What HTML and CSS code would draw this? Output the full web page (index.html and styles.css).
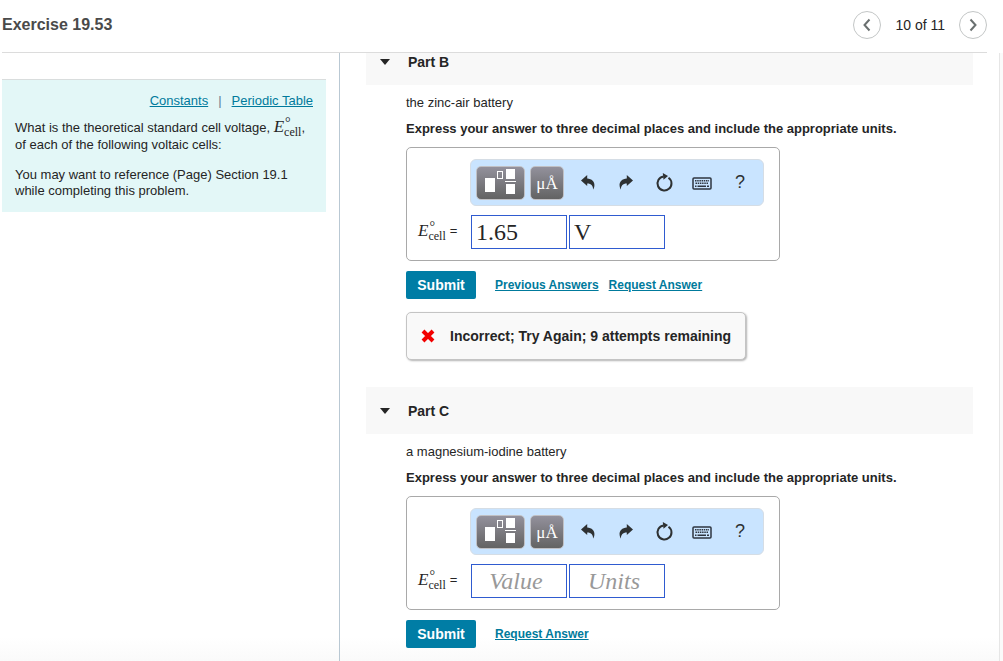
FILE: index.html
```html
<!DOCTYPE html>
<html lang="en">

<head>
    <meta charset="UTF-8">
    <meta name="viewport" content="width=device-width, initial-scale=1">
    <title>Exercise 19.53</title>
    <link rel="stylesheet" href="styles.css">
</head>

<body>
    <!-- shared icons -->
    <svg class="sprite" aria-hidden="true">
        <symbol id="icon-templates" viewBox="0 0 32 28">
            <rect x="0" y="9" width="10" height="14" fill="#fff"/>
            <rect x="12.500" y="2.500" width="5" height="7" fill="none" stroke="#fff"/>
            <rect x="21" y="0" width="9" height="10" fill="#fff"/>
            <rect x="20" y="12" width="11" height="1" fill="#fff"/>
            <rect x="21" y="15" width="9" height="10" fill="#fff"/>
        </symbol>
        <symbol id="icon-undo" viewBox="0 0 14 16">
            <path d="M0 5.500 6.200 0v3.400c4.600.2 7.600 3.400 7.200 7.300-.1 1.600-.8 3-1.400 3.900.3-3.400-1.600-6.100-5.800-6.100V11z" fill="#2e3132"/>
        </symbol>
        <symbol id="icon-redo" viewBox="0 0 14 16">
            <path d="M14 5.500 7.800 0v3.400C3.200 3.600.2 6.800.6 10.700c.1 1.600.8 3 1.400 3.900-.3-3.400 1.600-6.100 5.800-6.100V11z" fill="#2e3132"/>
        </symbol>
        <symbol id="icon-reset" viewBox="0 0 18 20">
            <path d="M13.500 4.700A7 7 0 1 1 8.500 3.500" fill="none" stroke="#2e3132" stroke-width="2"/>
            <path d="M7.800 0 13 3.100 8.500 6.800z" fill="#2e3132"/>
        </symbol>
        <symbol id="icon-keyboard" viewBox="0 0 20 14">
            <rect x="1" y="2" width="18" height="11" rx="1" fill="none" stroke="#2e3540" stroke-width="1.500"/>
            <path d="M3 4.800h14M3.500 7.300h13" stroke="#2e3540" stroke-width="1.500" stroke-dasharray="1.500 .7"/>
            <path d="M3 10.200h1.500M5.500 10.200h8.500M15 10.200h2" stroke="#2e3540" stroke-width="1.500"/>
        </symbol>
        <symbol id="icon-cross" viewBox="0 0 14 14">
            <path d="M2 2 12 12M12 2 2 12" stroke="#f20000" stroke-width="4"/>
        </symbol>
        <symbol id="icon-left" viewBox="0 0 10 14">
            <path d="M7.500 1.500 2.500 7l5 5.500" fill="none" stroke="#6a7070" stroke-width="2"/>
        </symbol>
        <symbol id="icon-right" viewBox="0 0 10 14">
            <path d="M2.500 1.500l5 5.500-5 5.500" fill="none" stroke="#6a7070" stroke-width="2"/>
        </symbol>
    </svg>

    <header class="page-header">
        <h1>Exercise 19.53</h1>
        <nav class="pager">
            <button type="button" class="pager-btn" aria-label="Previous"><svg width="10" height="14"><use href="#icon-left"/></svg></button>
            <span>10 of 11</span>
            <button type="button" class="pager-btn" aria-label="Next"><svg width="10" height="14"><use href="#icon-right"/></svg></button>
        </nav>
    </header>

    <div class="workspace">
        <aside class="sidebar">
            <div class="intro">
                <div class="resources">
                    <a href="#">Constants</a>
                    <span class="divider">|</span>
                    <a href="#">Periodic Table</a>
                </div>
                <p>What is the theoretical standard cell voltage, <span class="formula"><i>E</i><span class="scripts"><span class="sup">°</span><span>cell</span></span></span>, of each of the following voltaic cells:</p>
                <p>You may want to reference (Page) Section 19.1 while completing this problem.</p>
            </div>
        </aside>

        <main class="parts">
            <section class="part">
                <h2 class="part-header"><button type="button" class="toggle"><span class="caret"></span>Part B</button></h2>
                <div class="part-body">
                    <p>the zinc-air battery</p>
                    <p class="instructions">Express your answer to three decimal places and include the appropriate units.</p>
                    <div class="answer-box">
                        <div class="toolbar">
                            <button type="button" class="tool-main templates" aria-label="Templates"><svg width="32" height="28"><use href="#icon-templates"/></svg></button>
                            <button type="button" class="tool-main symbols">μÅ</button>
                            <button type="button" class="tool" aria-label="Undo"><svg width="14" height="16"><use href="#icon-undo"/></svg></button>
                            <button type="button" class="tool" aria-label="Redo"><svg width="14" height="16"><use href="#icon-redo"/></svg></button>
                            <button type="button" class="tool" aria-label="Reset"><svg width="18" height="20"><use href="#icon-reset"/></svg></button>
                            <button type="button" class="tool" aria-label="Keyboard shortcuts"><svg width="20" height="14"><use href="#icon-keyboard"/></svg></button>
                            <button type="button" class="tool">?</button>
                        </div>
                        <label class="lhs" for="value-b"><span class="formula"><i>E</i><span class="scripts"><span class="sup">°</span><span>cell</span></span></span> <span>=</span></label>
                        <div class="fields">
                            <input type="text" id="value-b" value="1.65" placeholder="Value">
                            <input type="text" aria-label="Units" value="V" placeholder="Units">
                        </div>
                    </div>
                    <div class="actions">
                        <button type="button" class="submit">Submit</button>
                        <a href="#">Previous Answers</a>
                        <a href="#">Request Answer</a>
                    </div>
                    <div class="feedback">
                        <svg width="14" height="14" aria-hidden="true"><use href="#icon-cross"/></svg>
                        <span>Incorrect; Try Again; 9 attempts remaining</span>
                    </div>
                </div>
            </section>

            <section class="part">
                <h2 class="part-header"><button type="button" class="toggle"><span class="caret"></span>Part C</button></h2>
                <div class="part-body">
                    <p>a magnesium-iodine battery</p>
                    <p class="instructions">Express your answer to three decimal places and include the appropriate units.</p>
                    <div class="answer-box">
                        <div class="toolbar">
                            <button type="button" class="tool-main templates" aria-label="Templates"><svg width="32" height="28"><use href="#icon-templates"/></svg></button>
                            <button type="button" class="tool-main symbols">μÅ</button>
                            <button type="button" class="tool" aria-label="Undo"><svg width="14" height="16"><use href="#icon-undo"/></svg></button>
                            <button type="button" class="tool" aria-label="Redo"><svg width="14" height="16"><use href="#icon-redo"/></svg></button>
                            <button type="button" class="tool" aria-label="Reset"><svg width="18" height="20"><use href="#icon-reset"/></svg></button>
                            <button type="button" class="tool" aria-label="Keyboard shortcuts"><svg width="20" height="14"><use href="#icon-keyboard"/></svg></button>
                            <button type="button" class="tool">?</button>
                        </div>
                        <label class="lhs" for="value-c"><span class="formula"><i>E</i><span class="scripts"><span class="sup">°</span><span>cell</span></span></span> <span>=</span></label>
                        <div class="fields">
                            <input type="text" id="value-c" placeholder="Value">
                            <input type="text" aria-label="Units" placeholder="Units">
                        </div>
                    </div>
                    <div class="actions">
                        <button type="button" class="submit">Submit</button>
                        <a href="#">Request Answer</a>
                    </div>
                </div>
            </section>
        </main>
        <div class="gutter"></div>
    </div>
</body>

</html>
```
FILE: styles.css
```css
* {
    box-sizing: border-box;
}
body {
    display: flex;
    flex-direction: column;
    height: 100vh;
    margin: 0;
    overflow: hidden;
    background: #fff;
    color: #252525;
    font-family: "Liberation Sans", Arial, sans-serif;
    font-size: 13px;
    line-height: 16px;
}
h1, h2, p {
    margin: 0;
}
button, input {
    margin: 0;
    padding: 0;
    font-family: inherit;
}
button {
    border: 0;
    background: none;
    color: inherit;
    cursor: pointer;
}
a {
    color: #007a9c;
}
.sprite {
    display: none;
}

/* header */
.page-header {
    display: flex;
    flex: none;
    align-items: center;
    justify-content: space-between;
    height: 53px;
    margin: 0 16px 0 2px;
    padding-bottom: 3px;
    border-bottom: 1px solid #dcdcdc;
}
.page-header h1 {
    color: #4a4a4a;
    font-size: 16px;
}
.pager {
    display: flex;
    align-items: center;
    gap: 14px;
    font-size: 14px;
}
.pager-btn {
    display: flex;
    align-items: center;
    justify-content: center;
    width: 28px;
    height: 28px;
    border: 1px solid #c3c6c6;
    border-radius: 50%;
}

.workspace {
    display: flex;
    flex: 1;
    min-height: 0;
    background: linear-gradient(to top, #fafafa, #fff 24px);
}

/* left column */
.sidebar {
    flex: none;
    width: 340px;
    padding: 26px 13px 0 2px;
    border-right: 1px solid #b9c8d3;
}
.intro {
    padding: 13px;
    border-top: 1px solid #d9dddd;
    background: #e3f7f7;
}
.intro p {
    margin-bottom: 14px;
}
.intro p:last-child {
    margin-bottom: 0;
}
.resources {
    display: flex;
    justify-content: flex-end;
    gap: 10px;
    margin-bottom: 8px;
}
.divider {
    color: #5f7f95;
}

.formula {
    display: inline-flex;
    align-items: center;
    font-family: "Liberation Serif", serif;
    font-size: 17px;
}
.scripts {
    display: flex;
    flex-direction: column;
    font-size: 12px;
    line-height: 9px;
}
.sup {
    padding-left: 1px;
    font-size: 14px;
    line-height: 11px;
}

/* parts */
.parts {
    flex: 1;
    min-width: 0;
    padding: 0 26px;
    overflow: hidden;
}
.part {
    margin-bottom: 27px;
}
.part:first-child {
    margin-top: -15px;
}
.part-header {
    display: flex;
    align-items: center;
    height: 47px;
    padding-left: 14px;
    background: #f8f8f8;
}
.toggle {
    display: flex;
    align-items: center;
    gap: 18px;
    font-size: 14px;
    font-weight: bold;
}
.caret {
    border: 5px solid transparent;
    border-top: 6px solid #252525;
    border-bottom: 0;
}
.part-body {
    display: flex;
    flex-direction: column;
    align-items: flex-start;
    gap: 10px;
    padding: 10px 0 0 40px;
}
.instructions {
    font-weight: bold;
}

.answer-box {
    display: grid;
    grid-template-columns: 52px auto;
    row-gap: 9px;
    padding: 11px 15px 11px 11px;
    border: 1px solid #a9a9a9;
    border-radius: 5px;
}
.toolbar {
    display: flex;
    grid-column: 2;
    align-items: center;
    height: 47px;
    padding: 0 4px 0 5px;
    border: 1px solid #d5dde5;
    border-radius: 6px;
    background: #c9e4ff;
}
.tool-main {
    display: flex;
    align-items: center;
    justify-content: center;
    height: 34px;
    margin-right: 5px;
    border: 1px solid #c0c0c4;
    border-radius: 5px;
    background: linear-gradient(#93919c, #636363);
    color: #fff;
}
.templates {
    width: 49px;
}
.symbols {
    width: 34px;
    padding-top: 3px;
    font-family: "Liberation Serif", serif;
    font-size: 17px;
}
.tool {
    display: flex;
    align-items: center;
    justify-content: center;
    width: 38px;
    height: 34px;
    color: #2e3132;
    font-size: 18px;
}
.lhs {
    display: flex;
    align-items: center;
    gap: 4px;
    padding-bottom: 2px;
}
.fields {
    display: flex;
    gap: 2px;
    padding-left: 1px;
}
.fields input {
    width: 96px;
    height: 34px;
    padding: 0 4px;
    border: 1px solid #2f5bd0;
    border-radius: 0;
    background: #fff;
    color: #252525;
    font-family: "Liberation Serif", serif;
    font-size: 24px;
}
.fields input:placeholder-shown {
    padding-right: 10px;
    font-style: italic;
    text-align: center;
}
.fields input::placeholder {
    color: #999;
}

.actions {
    display: flex;
    align-items: center;
    gap: 10px;
    font-size: 12px;
    font-weight: bold;
}
.submit {
    width: 70px;
    height: 28px;
    margin-right: 9px;
    border-radius: 2px;
    background: #007da5;
    color: #fff;
    font-size: 14px;
    font-weight: bold;
}
.feedback {
    display: flex;
    align-items: center;
    gap: 15px;
    height: 48px;
    margin-top: 3px;
    padding: 0 14px;
    border: 1px solid #c4c4c4;
    border-radius: 5px;
    background: #f9f9f9;
    box-shadow: 1px 1px 2px rgba(0, 0, 0, .3);
    font-size: 14px;
    font-weight: bold;
}

.gutter {
    flex: none;
    width: 4px;
    border-left: 1px solid #e6e6e6;
    background: #fafafa;
}
```
